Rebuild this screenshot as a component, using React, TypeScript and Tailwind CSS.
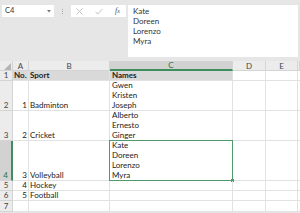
import React from "react";

const cols = ["", "A", "B", "C", "D", "E", ""];

type Row = {
  n: number;
  h: string;
  a?: string;
  b?: string;
  c?: string[];
  header?: boolean;
  sel?: boolean;
};

const rows: Row[] = [
  { n: 1, h: "h-[10px]", a: "No.", b: "Sport", c: ["Names"], header: true },
  { n: 2, h: "h-[30px]", a: "1", b: "Badminton", c: ["Gwen", "Kristen", "Joseph"] },
  { n: 3, h: "h-[30px]", a: "2", b: "Cricket", c: ["Alberto", "Ernesto", "Ginger"] },
  { n: 4, h: "h-[40px]", a: "3", b: "Volleyball", c: ["Kate", "Doreen", "Lorenzo", "Myra"], sel: true },
  { n: 5, h: "h-[10px]", a: "4", b: "Hockey" },
  { n: 6, h: "h-[10px]", a: "5", b: "Football" },
  { n: 7, h: "h-[11px]" },
];

export default function App() {
  return (
    <div className="w-[300px] h-[213px] overflow-hidden bg-[#e6e6e6] font-['Lato','Liberation_Sans',sans-serif] text-[#222]">
      {/* formula bar */}
      <div className="h-[61px] flex items-start pt-[5px] pl-[2px]">
        <div className="w-[52px] h-[12px] bg-white flex items-center justify-between pl-[3px] pr-[3px] text-[7.5px] text-[#333]">
          <span>C4</span>
          <svg width="4" height="3" viewBox="0 0 4 3"><path d="M0 0h4L2 2.5z" fill="#777" /></svg>
        </div>
        <div className="w-[17px] h-[12px] flex flex-col items-center justify-center gap-[1px]">
          <div className="w-[1px] h-[1px] bg-[#aaa]" />
          <div className="w-[1px] h-[1px] bg-[#aaa]" />
          <div className="w-[1px] h-[1px] bg-[#aaa]" />
        </div>
        <div className="w-[55px] h-[12px] bg-white flex items-center pl-[5px]">
          <svg width="7" height="7" viewBox="0 0 7 7"><path d="M0.5 0.5l6 6M6.5 0.5l-6 6" stroke="#bbb" strokeWidth="0.9" /></svg>
          <svg className="ml-[12px]" width="8" height="7" viewBox="0 0 8 7"><path d="M0.5 3.8l2.3 2.3L7.5 0.8" stroke="#bbb" strokeWidth="0.9" fill="none" /></svg>
          <span className="ml-[12px] text-[8px] italic font-['Liberation_Serif',serif] text-[#555]">f<span className="text-[6px]">x</span></span>
        </div>
        <div className="ml-[2px] w-[170px] h-[52px] bg-white pl-[5px] pt-[1px] text-[8px] leading-[10px] text-[#333]">
          <div>Kate</div>
          <div>Doreen</div>
          <div>Lorenzo</div>
          <div>Myra</div>
        </div>
      </div>

      {/* grid */}
      <div className="grid grid-cols-[13px_16px_81px_123px_33px_32px_1fr] bg-white text-[8px] leading-[10px]">
        {cols.map((c, i) => (
          <div
            key={"h" + i}
            className={
              "h-[10px] flex items-center justify-center border-r border-[#d4d4d4] " +
              (c === "C"
                ? "bg-[#d2d2d2] text-[#217346] border-b-2 border-b-[#3f8e5e]"
                : "bg-[#ececec] text-[#444] border-b border-b-[#d4d4d4]")
            }
          >
            {i === 0 ? (
              <svg width="7" height="7" viewBox="0 0 7 7" className="ml-[3px] mt-[1px]">
                <path d="M7 0V7H0z" fill="#b5b5b5" />
              </svg>
            ) : (
              c
            )}
          </div>
        ))}
        {rows.map((r) => (
          <React.Fragment key={r.n}>
            <div
              className={
                r.h +
                " flex items-end justify-center border-b border-[#d4d4d4] " +
                (r.sel
                  ? "bg-[#d2d2d2] text-[#217346] border-r-2 border-r-[#3f8e5e]"
                  : "bg-[#ececec] text-[#444] border-r border-r-[#d4d4d4]")
              }
            >
              {r.n}
            </div>
            <div
              className={
                r.h +
                " flex items-end border-r border-b border-[#e2e2e2] " +
                (r.header ? "bg-[#d9d9d9] font-bold pl-[1px] justify-start" : "justify-end pr-[1px]")
              }
            >
              {r.a}
            </div>
            <div
              className={
                r.h +
                " flex items-end pl-[1px] border-r border-b border-[#e2e2e2] " +
                (r.header ? "bg-[#d9d9d9] font-bold" : "")
              }
            >
              {r.b}
            </div>
            <div
              className={
                r.h +
                " relative flex flex-col justify-end pl-[2px] border-r border-b border-[#e2e2e2] " +
                (r.header ? "bg-[#d9d9d9] font-bold" : "")
              }
            >
              {r.c?.map((t) => (
                <div key={t} className="h-[10px]">
                  {t}
                </div>
              ))}
              {r.sel && (
                <>
                  <div className="absolute left-[-1px] top-[-1px] right-[-1px] bottom-[-1px] border-[1.5px] border-[#4e9a6b]" />
                  <div className="absolute right-[-2px] bottom-[-2px] w-[3px] h-[3px] bg-[#4e9a6b]" />
                </>
              )}
            </div>
            <div className={r.h + " border-r border-b border-[#e2e2e2]"} />
            <div className={r.h + " border-r border-b border-[#e2e2e2]"} />
            <div className={r.h + " border-b border-[#e2e2e2]"} />
          </React.Fragment>
        ))}
      </div>
    </div>
  );
}
